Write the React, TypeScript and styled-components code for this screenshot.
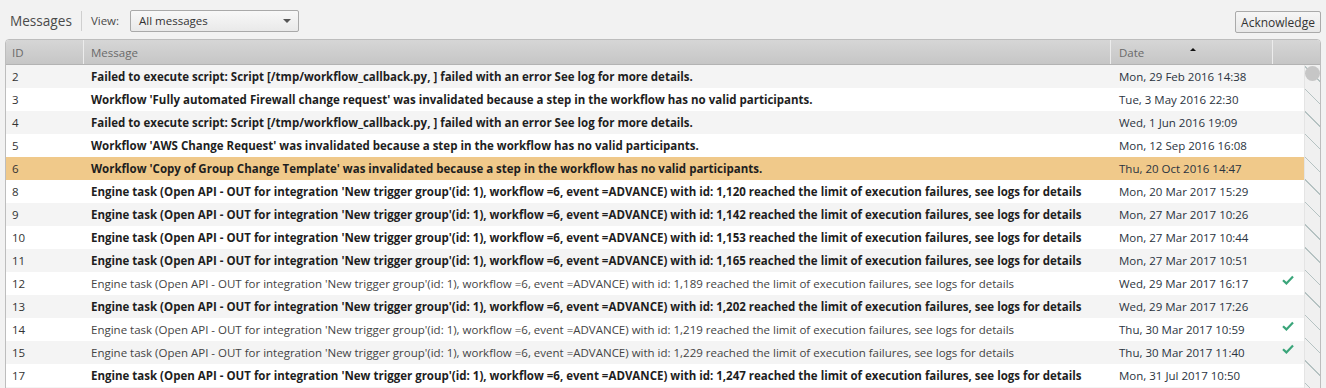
import styled, { createGlobalStyle } from "styled-components";

const GlobalStyle = createGlobalStyle`
  body {
    margin: 0;
    background: #f2f2f2;
    font-family: "Open Sans", "Noto Sans", Arial, sans-serif;
    color: #333;
  }
`;

type Msg = {
  id: number;
  text: string;
  date: string;
  unread: boolean;
  acked?: boolean;
  selected?: boolean;
};

const engine = (n: string) =>
  `Engine task (Open API - OUT for integration 'New trigger group'(id: 1), workflow =6, event =ADVANCE) with id: ${n} reached the limit of execution failures, see logs for details`;

const failed =
  "Failed to execute script: Script [/tmp/workflow_callback.py, ] failed with an error See log for more details.";

const messages: Msg[] = [
  { id: 2, text: failed, date: "Mon, 29 Feb 2016 14:38", unread: true },
  {
    id: 3,
    text: "Workflow 'Fully automated Firewall change request' was invalidated because a step in the workflow has no valid participants.",
    date: "Tue, 3 May 2016 22:30",
    unread: true,
  },
  { id: 4, text: failed, date: "Wed, 1 Jun 2016 19:09", unread: true },
  {
    id: 5,
    text: "Workflow 'AWS Change Request' was invalidated because a step in the workflow has no valid participants.",
    date: "Mon, 12 Sep 2016 16:08",
    unread: true,
  },
  {
    id: 6,
    text: "Workflow 'Copy of Group Change Template' was invalidated because a step in the workflow has no valid participants.",
    date: "Thu, 20 Oct 2016 14:47",
    unread: true,
    selected: true,
  },
  { id: 8, text: engine("1,120"), date: "Mon, 20 Mar 2017 15:29", unread: true },
  { id: 9, text: engine("1,142"), date: "Mon, 27 Mar 2017 10:26", unread: true },
  { id: 10, text: engine("1,153"), date: "Mon, 27 Mar 2017 10:44", unread: true },
  { id: 11, text: engine("1,165"), date: "Mon, 27 Mar 2017 10:51", unread: true },
  { id: 12, text: engine("1,189"), date: "Wed, 29 Mar 2017 16:17", unread: false, acked: true },
  { id: 13, text: engine("1,202"), date: "Wed, 29 Mar 2017 17:26", unread: true },
  { id: 14, text: engine("1,219"), date: "Thu, 30 Mar 2017 10:59", unread: false, acked: true },
  { id: 15, text: engine("1,229"), date: "Thu, 30 Mar 2017 11:40", unread: false, acked: true },
  { id: 17, text: engine("1,247"), date: "Mon, 31 Jul 2017 10:50", unread: true },
];

const Page = styled.div`
  padding: 0 5px;
  height: 388px;
  overflow: hidden;
`;

const TopBar = styled.div`
  display: flex;
  justify-content: space-between;
  height: 39px;
`;

const LeftGroup = styled.div`
  display: flex;
  align-items: center;
  padding-left: 5px;
  height: 41px;
`;

const Title = styled.span`
  font-size: 13.6px;
  color: #4a4a4a;
  padding-right: 9px;
  border-right: 1px solid #cfcfcf;
  line-height: 20px;
`;

const ViewLabel = styled.span`
  font-size: 11.5px;
  color: #4a4a4a;
  margin-left: 9px;
  margin-right: 11px;
`;

const Select = styled.div`
  width: 169px;
  height: 22px;
  box-sizing: border-box;
  border: 1px solid #a9a9a9;
  border-radius: 2px;
  background: linear-gradient(#f8f8f8, #e9e9e9);
  display: flex;
  align-items: center;
  justify-content: space-between;
  padding: 0 7px 0 8px;
  font-size: 11.5px;
  color: #333;
`;

const Caret = styled.span`
  width: 0;
  height: 0;
  border-left: 4px solid transparent;
  border-right: 4px solid transparent;
  border-top: 4px solid #555;
`;

const Button = styled.button`
  margin-top: 11px;
  height: 22px;
  width: 86px;
  padding: 0;
  border: 1px solid #aaa;
  border-radius: 2px;
  background: linear-gradient(#f6f6f6, #e8e8e8);
  font-family: inherit;
  font-size: 12px;
  color: #333;
`;

const Table = styled.div`
  border: 1px solid #bdbdbd;
  border-radius: 4px 4px 0 0;
  background: #fff;
  overflow: hidden;
`;

const cols = "78px 1027px 162px 1fr";

const Header = styled.div`
  display: grid;
  grid-template-columns: ${cols};
  height: 24px;
  background: linear-gradient(#d6d6d6, #c6c6c6);
  border-bottom: 1px solid #b3b3b3;
`;

const HeadCell = styled.div<{ $pad: number }>`
  position: relative;
  display: flex;
  align-items: center;
  padding-left: ${(p) => p.$pad}px;
  font-size: 11.5px;
  color: #6a6a6a;
  border-right: 1px solid #ececec;
  &:last-child {
    border-right: none;
  }
`;

const SortArrow = styled.span`
  position: absolute;
  top: 8px;
  left: 79px;
  width: 0;
  height: 0;
  border-left: 3px solid transparent;
  border-right: 3px solid transparent;
  border-bottom: 3px solid #111;
`;

const Body = styled.div`
  display: flex;
  height: 340px;
`;

const Rows = styled.div`
  flex: 1;
  background: #f4f4f4;
`;

const Row = styled.div<{ $bg: string }>`
  display: grid;
  grid-template-columns: ${cols};
  height: 23px;
  align-items: center;
  background: ${(p) => p.$bg};
  font-size: 11.5px;
  color: #333;
  white-space: nowrap;
`;

const Cell = styled.div<{ $pad: number }>`
  padding-left: ${(p) => p.$pad}px;
  overflow: hidden;
`;

const MessageCell = styled(Cell)<{ $bold: boolean }>`
  font-weight: ${(p) => (p.$bold ? 700 : 400)};
  font-size: 11.5px;
  color: ${(p) => (p.$bold ? "#1e1e1e" : "#444")};
`;

const DateCell = styled(Cell)`
  color: #2a3340;
`;

const CheckCell = styled.div`
  display: flex;
  justify-content: center;
  align-items: center;
  padding-right: 2px;
  height: 100%;
  padding-bottom: 8px;
  box-sizing: border-box;
`;

const Scrollbar = styled.div`
  position: relative;
  width: 15px;
  background-color: #f0f0f0;
  background-image: repeating-linear-gradient(
    45deg,
    transparent 0 15px,
    #b5c2c2 15px 16px
  );
  border-left: 1px solid #e4e4e4;
`;

const Thumb = styled.div`
  position: absolute;
  top: 1px;
  left: 0px;
  width: 15px;
  height: 15px;
  border-radius: 50%;
  background: #c6c6c6;
`;

const Check = () => (
  <svg width="12" height="10" viewBox="0 0 12 10">
    <path d="M1 5.2 L4.4 8.4 L11 1.4" fill="none" stroke="#3aa57a" strokeWidth="2.2" />
  </svg>
);

const rowBg = (m: Msg, i: number) => {
  if (m.selected) return "#f0c98a";
  return i % 2 === 0 ? "#f4f4f4" : "#ffffff";
};

export default function App() {
  return (
    <Page>
      <GlobalStyle />
      <TopBar>
        <LeftGroup>
          <Title>Messages</Title>
          <ViewLabel>View:</ViewLabel>
          <Select>
            <span>All messages</span>
            <Caret />
          </Select>
        </LeftGroup>
        <Button>Acknowledge</Button>
      </TopBar>
      <Table>
        <Header>
          <HeadCell $pad={6}>ID</HeadCell>
          <HeadCell $pad={7}>Message</HeadCell>
          <HeadCell $pad={8}>
            Date
            <SortArrow />
          </HeadCell>
          <HeadCell $pad={0} />
        </Header>
        <Body>
          <Rows>
            {messages.map((m, i) => (
              <Row key={m.id} $bg={rowBg(m, i)}>
                <Cell $pad={6}>{m.id}</Cell>
                <MessageCell $pad={7} $bold={m.unread}>
                  {m.text}
                </MessageCell>
                <DateCell $pad={8}>{m.date}</DateCell>
                <CheckCell>{m.acked && <Check />}</CheckCell>
              </Row>
            ))}
          </Rows>
          <Scrollbar>
            <Thumb />
          </Scrollbar>
        </Body>
      </Table>
    </Page>
  );
}
